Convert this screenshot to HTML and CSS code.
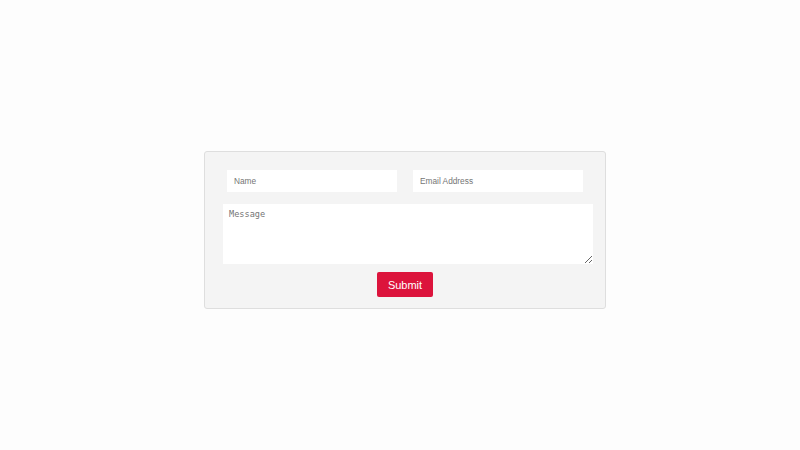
FILE: index.html
```html
<!DOCTYPE html>
<html>
<head>
<meta charset="utf-8">
<link rel="stylesheet" href="styles.css">
</head>
<body>
<div class="page">
  <form class="card">
    <div class="row">
      <input class="field" type="text" placeholder="Name">
      <input class="field" type="text" placeholder="Email Address">
    </div>
    <textarea class="message" placeholder="Message"></textarea>
    <button class="submit" type="button">Submit</button>
  </form>
</div>
</body>
</html>
```
FILE: styles.css
```css
html, body {
  margin: 0;
  padding: 0;
  background: #fdfdfd;
}
.page {
  padding: 151px 0 0 204px;
}
.card {
  box-sizing: border-box;
  width: 402px;
  height: 158px;
  background: #f4f4f4;
  border: 1px solid #dedede;
  border-radius: 3px;
  padding: 18px 12px 0 18px;
  display: flex;
  flex-direction: column;
  margin: 0;
}
.row {
  display: flex;
  gap: 16px;
  padding-left: 4px;
}
.field {
  box-sizing: border-box;
  width: 170px;
  height: 22px;
  border: none;
  background: #fff;
  padding: 0 7px;
  font-family: "Liberation Sans", Arial, sans-serif;
  font-size: 8.3px;
  color: #333;
  outline: none;
}
.field::placeholder {
  color: #757575;
}
.message {
  box-sizing: border-box;
  margin-top: 12px;
  width: 370px;
  height: 60px;
  border: none;
  background: #fff;
  padding: 5px 6px;
  font-family: "DejaVu Sans Mono", monospace;
  font-size: 8.6px;
  color: #333;
  outline: none;
}
.message::placeholder {
  color: #757575;
}
.submit {
  align-self: flex-start;
  margin: 8px 0 0 154px;
  width: 56px;
  height: 25px;
  border: none;
  border-radius: 2px;
  background: #dc143c;
  color: #fff;
  font-family: "Liberation Sans", Arial, sans-serif;
  font-size: 11px;
  padding: 0;
}
```
